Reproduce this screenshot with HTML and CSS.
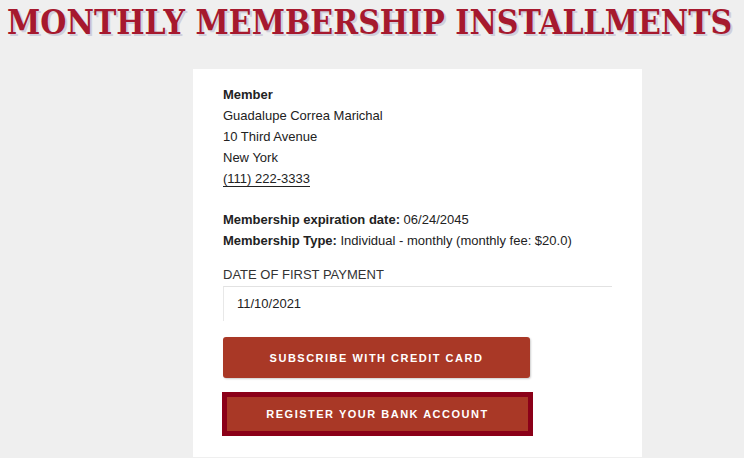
FILE: index.html
```html
<!DOCTYPE html>
<html>
<head>
<meta charset="utf-8">
<link rel="stylesheet" href="styles.css">
</head>
<body>
<h1 class="title">MONTHLY MEMBERSHIP INSTALLMENTS</h1>
<div class="card">
  <div class="member">
    <div class="strong">Member</div>
    <div>Guadalupe Correa Marichal</div>
    <div>10 Third Avenue</div>
    <div>New York</div>
    <div><a class="phone" href="#">(111) 222-3333</a></div>
  </div>
  <div class="info">
    <div><span class="strong">Membership expiration date:</span> 06/24/2045</div>
    <div><span class="strong">Membership Type:</span> Individual - monthly (monthly fee: $20.0)</div>
  </div>
  <label class="label">DATE OF FIRST PAYMENT</label>
  <div class="input">11/10/2021</div>
  <button class="btn btn-credit">SUBSCRIBE WITH CREDIT CARD</button>
  <button class="btn btn-bank">REGISTER YOUR BANK ACCOUNT</button>
</div>
</body>
</html>
```
FILE: styles.css
```css
html, body {
  margin: 0;
  padding: 0;
  background: #efefef;
  height: 458px;
  overflow: hidden;
}
body {
  font-family: "Liberation Sans", Arial, sans-serif;
  font-size: 13px;
  line-height: 21px;
  color: #222;
}
.title {
  margin: 0;
  padding: 3px 0 0 7px;
  font-family: "DejaVu Serif Condensed", "DejaVu Serif", serif;
  font-stretch: condensed;
  font-weight: bold;
  font-size: 33.4px;
  line-height: 40px;
  color: #a6192e;
  text-shadow: 2px 2px 0 #cfd0dc;
  white-space: nowrap;
}
.card {
  margin: 26px 0 0 193px;
  width: 449px;
  box-sizing: border-box;
  background: #fff;
  padding: 15px 30px 21px 30px;
  display: flex;
  flex-direction: column;
  align-items: flex-start;
}
.strong { font-weight: bold; }
.member { margin-bottom: 20px; }
.phone {
  color: #222;
  text-decoration: none;
  border-bottom: 1px solid #222;
}
.info { margin-bottom: 13px; }
.label {
  color: #333;
  margin-bottom: 1px;
}
.input {
  align-self: stretch;
  height: 35px;
  box-sizing: border-box;
  padding: 6px 0 0 13px;
  border-top: 1px solid #e2e2e2;
  border-left: 1px solid #e8e8e8;
  color: #222;
}
.btn {
  font-family: "Liberation Sans", Arial, sans-serif;
  font-weight: bold;
  font-size: 11px;
  letter-spacing: 1.5px;
  color: #fff;
  background: #a93826;
  cursor: pointer;
}
.btn-credit {
  margin-top: 16px;
  width: 307px;
  height: 41px;
  border: none;
  border-radius: 3px;
  box-shadow: 1px 1px 2px rgba(0,0,0,0.2);
}
.btn-bank {
  margin-top: 14px;
  margin-left: -1px;
  width: 311px;
  height: 44px;
  border: 5px solid #8b0018;
  border-radius: 0;
}
```
